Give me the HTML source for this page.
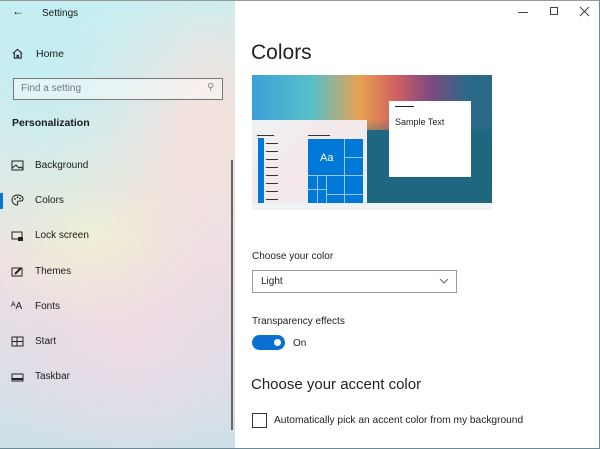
<!DOCTYPE html>
<html><head><style>
*{margin:0;padding:0;box-sizing:border-box}
body{width:600px;height:449px;overflow:hidden;font-family:"Liberation Sans",sans-serif;background:#fff;position:relative}
.side{position:absolute;left:0;top:0;width:235px;height:449px;
background:
radial-gradient(ellipse 160px 200px at 40px 60px,rgba(195,238,242,1),rgba(195,238,242,0)),
radial-gradient(ellipse 160px 140px at 200px 120px,rgba(247,224,220,0.9),rgba(247,224,220,0)),
radial-gradient(ellipse 120px 100px at 90px 230px,rgba(242,242,210,0.9),rgba(242,242,210,0)),
radial-gradient(ellipse 150px 150px at 130px 320px,rgba(240,218,228,0.9),rgba(240,218,228,0)),
linear-gradient(180deg,#c8eef0 0%,#ebe6e0 35%,#ecdde4 60%,#cde0e8 100%)}
.t{position:absolute;font-size:10px;color:#1a1a1a;white-space:nowrap}
.ic{position:absolute;left:11px;width:13px;height:11px}
.main .t{color:#222}
</style></head><body>
<div class="side">
<div class="t" style="left:12px;top:4px;font-size:12px">&#8592;</div>
<div class="t" style="left:42px;top:8px;font-size:10px">Settings</div>
<svg class="ic" style="top:48px" viewBox="0 0 13 12"><path d="M1.5 6 6.5 1.5 11.5 6M3 5v6h3V8h1.5v3h3V5" fill="none" stroke="#222" stroke-width="1.2"/></svg>
<div class="t" style="left:36px;top:48px;font-size:10.5px">Home</div>
<div style="position:absolute;left:13px;top:78px;width:210px;height:22px;border:1px solid #777;background:rgba(255,255,255,0.45)"></div>
<div class="t" style="left:21px;top:83px;color:#777">Find a setting</div>
<div class="t" style="left:207px;top:82px;color:#888;font-size:10px">&#9906;</div>
<div class="t" style="left:12px;top:117px;font-weight:bold;font-size:10.5px">Personalization</div>
<svg class="ic" style="top:160px" viewBox="0 0 13 11"><rect x="1" y="1" width="11" height="9" fill="none" stroke="#222"/><path d="M1 8l4-3 3 3 2-1 2 2" fill="none" stroke="#222"/></svg>
<div class="t" style="left:35px;top:160px">Background</div>
<div style="position:absolute;left:0;top:193px;width:3px;height:16px;background:#0078d7"></div>
<svg class="ic" style="top:194px;height:12px" viewBox="0 0 13 12"><path d="M6.5 1C3 1 1 3.5 1 6s2 5 5 5c1 0 1-1 .5-2s0-2 1.5-2h2c1.5 0 2-1 2-2.5C12 2.5 9.5 1 6.5 1z" fill="none" stroke="#222"/><circle cx="4" cy="5" r=".9" fill="#222"/><circle cx="6.5" cy="3.3" r=".9" fill="#222"/><circle cx="9" cy="4.5" r=".9" fill="#222"/></svg>
<div class="t" style="left:35px;top:195px">Colors</div>
<svg class="ic" style="top:231px" viewBox="0 0 13 11"><rect x="1" y="1" width="10" height="7" fill="none" stroke="#222"/><rect x="7" y="6" width="5" height="4" fill="#222"/></svg>
<div class="t" style="left:35px;top:230px">Lock screen</div>
<svg class="ic" style="top:266px" viewBox="0 0 13 11"><rect x="1" y="2" width="10" height="8" fill="none" stroke="#222"/><path d="M4 8l6-6" stroke="#222" stroke-width="2"/></svg>
<div class="t" style="left:35px;top:266px">Themes</div>
<div class="t" style="left:11px;top:301px;font-size:10px">ᴬA</div>
<div class="t" style="left:35px;top:301px">Fonts</div>
<svg class="ic" style="top:336px" viewBox="0 0 13 11"><rect x="1" y="1" width="11" height="9" fill="none" stroke="#222"/><path d="M1 5.5h11M6 1v9" stroke="#222"/></svg>
<div class="t" style="left:35px;top:336px">Start</div>
<svg class="ic" style="top:372px" viewBox="0 0 13 11"><rect x="1" y="2" width="11" height="7" fill="none" stroke="#222"/><path d="M1 7h11" stroke="#222" stroke-width="2"/></svg>
<div class="t" style="left:35px;top:371px">Taskbar</div>
<div style="position:absolute;left:231px;top:160px;width:2px;height:270px;background:#666"></div>
</div>
<div class="main">
<svg style="position:absolute;left:510px;top:0" width="90" height="25"><path d="M8 12.5h10" stroke="#444"/><rect x="40.5" y="7.5" width="7" height="7" fill="none" stroke="#444"/><path d="M70 7l9 9M79 7l-9 9" stroke="#444"/></svg>
<div class="t" style="left:251px;top:41px;font-size:21px">Colors</div>
<div style="position:absolute;left:252px;top:75px;width:240px;height:135px;background:#f0f3f6;overflow:hidden">
<div style="position:absolute;left:0;top:0;width:240px;height:128px;background:#1f6680"></div>
<div style="position:absolute;left:0;top:0;width:240px;height:55px;background:linear-gradient(90deg,#3aa0d8 0%,#58c0c8 25%,#e8a050 45%,#d06060 60%,#7a4a80 75%,#2a6a88 90%)"></div>
<div style="position:absolute;left:0;top:45px;width:240px;height:30px;background:linear-gradient(180deg,rgba(31,102,128,0),#1f6680)"></div>
<div style="position:absolute;left:0;top:45px;width:115px;height:83px;background:linear-gradient(135deg,#eef2f4,#f4e8ea,#e8eef2)"></div>
<div style="position:absolute;left:6px;top:63px;width:6px;height:65px;background:#0078d7"></div>
<div style="position:absolute;left:14px;top:68px;width:12px;height:58px;background:repeating-linear-gradient(180deg,#333 0 1px,transparent 1px 8px)"></div>
<div style="position:absolute;left:5px;top:60px;width:17px;height:1px;background:#333"></div>
<div style="position:absolute;left:56px;top:60px;width:22px;height:1px;background:#333"></div>
<div style="position:absolute;left:56px;top:64px;width:55px;height:64px;background:#0078d7"></div>
<div style="position:absolute;left:56px;top:64px;width:55px;height:64px;background:linear-gradient(#9cc7ec,#9cc7ec) 36px 0/1px 64px no-repeat,linear-gradient(#9cc7ec,#9cc7ec) 0 36px/55px 1px no-repeat,linear-gradient(#9cc7ec,#9cc7ec) 36px 18px/19px 1px no-repeat,linear-gradient(#9cc7ec,#9cc7ec) 9px 36px/1px 28px no-repeat,linear-gradient(#9cc7ec,#9cc7ec) 18px 36px/1px 28px no-repeat,linear-gradient(#9cc7ec,#9cc7ec) 0 50px/19px 1px no-repeat,linear-gradient(#9cc7ec,#9cc7ec) 18px 55px/37px 1px no-repeat"></div>
<div class="t" style="left:68px;top:77px;color:#fff;font-size:11px">Aa</div>
<div style="position:absolute;left:137px;top:26px;width:82px;height:76px;background:#fff"></div>
<div style="position:absolute;left:143px;top:31px;width:19px;height:1px;background:#222"></div>
<div class="t" style="left:143px;top:42px;font-size:9px">Sample Text</div>
</div>
<div class="t" style="left:252px;top:251px;font-size:10px">Choose your color</div>
<div style="position:absolute;left:252px;top:270px;width:205px;height:23px;border:1px solid #999"></div>
<div class="t" style="left:261px;top:276px;font-size:10px">Light</div>
<svg style="position:absolute;left:439px;top:278px" width="10" height="6"><path d="M1 1l4 4 4-4" fill="none" stroke="#666"/></svg>
<div class="t" style="left:252px;top:316px;font-size:10px">Transparency effects</div>
<div style="position:absolute;left:252px;top:335px;width:33px;height:15px;border-radius:8px;background:#0a6fd0"></div>
<div style="position:absolute;left:274px;top:339px;width:7px;height:7px;border-radius:50%;background:#fff"></div>
<div class="t" style="left:293px;top:338px;font-size:10px">On</div>
<div class="t" style="left:251px;top:376px;font-size:15px">Choose your accent color</div>
<div style="position:absolute;left:252px;top:413px;width:15px;height:15px;border:1.5px solid #333"></div>
<div class="t" style="left:274px;top:415px;font-size:10.2px">Automatically pick an accent color from my background</div>
</div>
<div style="position:absolute;left:0;top:0;width:600px;height:1px;background:#999"></div>
<div style="position:absolute;left:599px;top:0;width:1px;height:449px;background:#6a8a98"></div>
<div style="position:absolute;left:0;top:448px;width:600px;height:1px;background:#6a8a98"></div>
</body></html>
